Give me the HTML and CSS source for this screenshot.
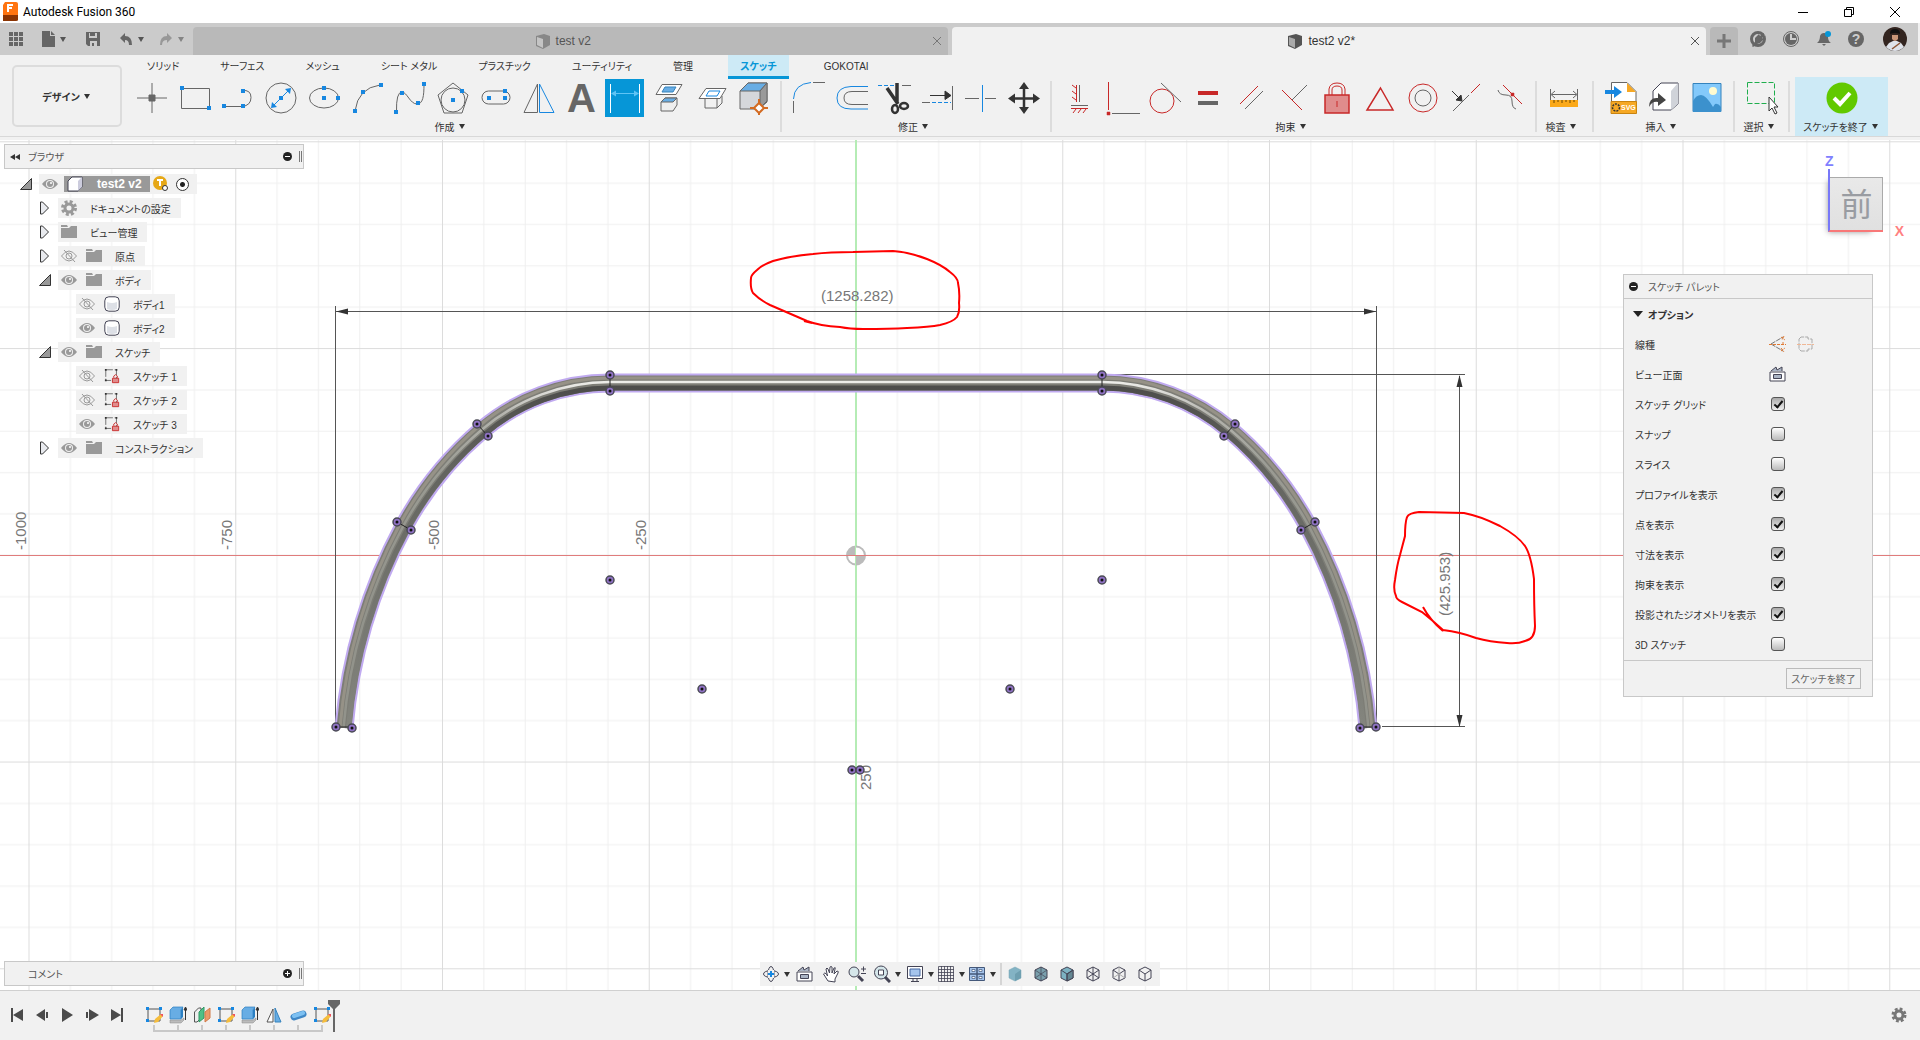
FILE: index.html
```
<!DOCTYPE html>
<html lang="ja">
<head>
  <meta charset="UTF-8">
  <title>Autodesk Fusion 360</title>
  <link rel="stylesheet" href="styles.css">
</head>
<body>
  <!-- shared icons -->
  <svg class="sprite" aria-hidden="true">
    <symbol id="eye" viewBox="0 0 16 16"><path d="M0 8Q8-2 16 8Q8 18 0 8z" fill="#999"/><circle cx="8" cy="8" r="4" fill="#f1f1f1"/><circle cx="8" cy="8" r="3" fill="#999"/><circle cx="9" cy="7" r="1" fill="#fff"/></symbol>
    <symbol id="eye-off" viewBox="0 0 16 16"><g fill="none" stroke="#999"><path d="M.5 8Q8-2 15.5 8Q8 18 .5 8z"/><circle cx="8" cy="8" r="3"/><path d="M3 2l11 12"/></g></symbol>
    <symbol id="folder" viewBox="0 0 16 16"><path d="M0 1h6l1 2H0zM0 4h8l2-2h6v12H0z" fill="#999"/></symbol>
    <symbol id="open" viewBox="0 0 12 12"><path d="M11.500 .5v11H.5z" fill="#999" stroke="#333"/></symbol>
    <symbol id="closed" viewBox="0 0 12 14"><path d="M1.500 1h2l6 6-6 6h-2z" fill="#e8eaee" stroke="#333"/></symbol>
    <symbol id="body" viewBox="0 0 16 16"><rect x=".8" y=".8" width="14.400" height="14.400" rx="4" fill="#fff" stroke="#445"/><path d="M3 6q5 2 10 0v7q-5 2-10 0z" fill="#dde0e6"/></symbol>
    <symbol id="sketch-lock" viewBox="0 0 18 18"><path d="M2 2h12v12H2z" fill="none" stroke="#666" stroke-dasharray="8 2"/><path d="M1 1h2v2H1zM13 1h2v2h-2zM1 13h2v2H1z" fill="#333"/><path d="M11 11V9q2-3 4 0v2" fill="none" stroke="#c82828"/><path d="M9.500 11.500h7v5h-7z" fill="#e08c8c" stroke="#c82828"/></symbol>
    <symbol id="cube" viewBox="0 0 16 16"><path d="M1 3l8-2 6 2v9l-7 4-7-3z" fill="currentColor"/><path d="M2 4l6 2v9l-6-3z" fill="#fff" opacity=".5"/></symbol>
    <symbol id="look" viewBox="0 0 18 16"><path d="M2 5l5-4 1 3 5-3v4" fill="#aab4c4" stroke="#445"/><path d="M1 6h15v9H1z" fill="#fff" stroke="#445"/><path d="M4.500 8.500h8v4h-8z" fill="#aab4c4" stroke="#445"/></symbol>
    <symbol id="t-sketch" viewBox="0 0 18 18"><path d="M3 3h12v12H3z" fill="none" stroke="#555"/><path d="M1 1h3v3H1zM14 1h3v3h-3zM1 13h3v3H1z" fill="#1787e0"/><path d="M9 17l1-4 6-5 2 2-5 6z" fill="#f6bd3c"/><path d="M15 8h3v3z" fill="#f05060"/></symbol>
    <symbol id="t-extrude" viewBox="0 0 18 18"><path d="M1 14l11 0 3-2v2l-3 3H1z" fill="#bbb" stroke="#888" stroke-width=".5"/><path d="M1 4l3-3h10l-2 3v9H1z" fill="#68ade4" stroke="#2b7fc2" stroke-width=".7"/><path d="M12 4l2-3v10l-2 2z" fill="#2b7fc2"/><path d="M16.500 3v11M15 4l1.500-3L18 4z" stroke="#333" fill="#333"/></symbol>
    <symbol id="vcube" viewBox="0 0 16 16"><path d="M8 1l6 3v8l-6 3-6-3V4z" stroke-linejoin="round"/></symbol>
  </svg>

  <header class="titlebar">
    <svg width="16" height="20" viewBox="0 0 16 20"><path d="M1 3l2-3h11q2 0 2 2v16H1z" fill="#ff7410"/><path d="M1 13h15v5q0 1-2 1H1z" fill="#8a3403"/><path d="M6 10V3h5M6 6h4" fill="none" stroke="#fff" stroke-width="2"/></svg>
    <h1>Autodesk Fusion 360</h1>
    <div class="window-buttons">
      <button aria-label="最小化"><svg width="12" height="12"><path d="M1 6.500h10" stroke="#000"/></svg></button>
      <button aria-label="元に戻す"><svg width="12" height="12"><path d="M1.500 3.500h7v7h-7zM3.500 3V1.500h7v7H9" fill="none" stroke="#000"/></svg></button>
      <button aria-label="閉じる"><svg width="12" height="12"><path d="M1 1l10 10M11 1L1 11" stroke="#000"/></svg></button>
    </div>
  </header>

  <div class="docbar">
    <div class="quick">
      <button aria-label="データ パネル"><svg width="14" height="16" fill="#666"><path d="M0 1h4v4H0zM5 1h4v4H5zM10 1h4v4h-4zM0 6h4v4H0zM5 6h4v4H5zM10 6h4v4h-4zM0 11h4v4H0zM5 11h4v4H5zM10 11h4v4h-4z"/></svg></button>
      <button class="file" aria-label="ファイル"><svg width="14" height="16"><path d="M1 0h8v5h5v11H1zM10 0l4 4h-4z" fill="#666"/></svg><i class="caret"></i></button>
      <button class="save" aria-label="保存"><svg width="14" height="16"><path d="M0 1h14v14H2l-2-2z" fill="#666"/><path d="M3 2h8v5H3zM4 10h7v5H4z" fill="#ccc"/><path d="M4 2h5v3H4zM6 12h2v3H6z" fill="#666"/></svg></button>
      <button aria-label="元に戻す"><svg width="14" height="14"><path d="M1 6l5-5v3q7 0 7 9h-3q0-5-4-5v3z" fill="#666"/></svg><i class="caret"></i></button>
      <button class="dim" aria-label="やり直し"><svg width="14" height="14"><path d="M13 6L8 1v3Q1 4 1 13h2q0-5 5-5v3z" fill="#777"/></svg><i class="caret"></i></button>
    </div>
    <div class="doctab">
      <button class="doc"><svg width="16" height="16" color="#888"><use href="#cube"/></svg>test v2</button>
      <button class="close" aria-label="閉じる"><svg width="10" height="10"><path d="M1 1l8 8M9 1L1 9" stroke="#777"/></svg></button>
    </div>
    <div class="doctab active">
      <button class="doc"><svg width="16" height="16" color="#555"><use href="#cube"/></svg>test2 v2*</button>
      <button class="close" aria-label="閉じる"><svg width="10" height="10"><path d="M1 1l8 8M9 1L1 9" stroke="#555"/></svg></button>
    </div>
    <button class="newtab" aria-label="新規"><svg width="14" height="14"><path d="M7 0v14M0 7h14" stroke="#777" stroke-width="3"/></svg></button>
    <div class="account">
      <button aria-label="拡張機能"><svg width="18" height="18"><circle cx="9" cy="9" r="6.500" fill="none" stroke="#666" stroke-width="3"/><path d="M15 0l3 3-3 3z" fill="#cbcbcb"/><path d="M6 8l4-4 1 2 3-3 2 2-3 3 2 1-4 4-3 1-4 3-1-1 3-4z" fill="#666"/></svg></button>
      <button aria-label="ジョブ ステータス"><svg width="18" height="18"><circle cx="9" cy="9" r="7.500" fill="none" stroke="#666"/><circle cx="9" cy="9" r="6" fill="#666"/><path d="M9 4v5h5" fill="none" stroke="#ccc" stroke-width="2"/></svg></button>
      <button aria-label="通知"><svg width="18" height="18"><path d="M2 13q3-2 3-7 1-3 4-3 4 0 4 4 0 4 3 6zM7 14h4l-2 2z" fill="#666"/><circle cx="13" cy="4" r="3" fill="#0696d7"/></svg></button>
      <button class="help" aria-label="ヘルプ">?</button>
      <button class="avatar" aria-label="プロファイル"><svg width="24" height="24" viewBox="0 0 24 24"><circle cx="12" cy="12" r="12" fill="#332520"/><path d="M3 20l3-4 4-2h4l4 2 3 4q-9 8-18 0z" fill="#dfe3ea"/><path d="M9 8h6v4q-3 4-6 0z" fill="#c89678"/><path d="M7 7q0-5 5-5t5 5q-5-2-10 0z" fill="#111"/><path d="M9 22l8-6" stroke="#8d5535" stroke-width="1.500"/></svg></button>
    </div>
  </div>

  <div class="ribbon">
    <button class="workspace">デザイン<i class="caret"></i></button>
    <div class="ribbon-main">
      <nav class="tabs">
        <a href="#">ソリッド</a><a href="#">サーフェス</a><a href="#">メッシュ</a><a href="#">シート メタル</a><a href="#">プラスチック</a><a href="#">ユーティリティ</a><a href="#">管理</a><a href="#" class="active">スケッチ</a><a href="#">GOKOTAI</a>
      </nav>
      <div class="groups">
        <section class="group">
          <div class="tools">
            <button aria-label="点"><svg viewBox="0 0 36 36"><path d="M18 3v30M3 18h30"/><path d="M15 15h6v6h-6z" fill="#666"/></svg></button>
            <button aria-label="長方形"><svg viewBox="0 0 36 36"><path d="M4.500 8.500h28v20h-28z"/><path class="p" d="M3 6h4v4H3zM30 26h4v4h-4z"/></svg></button>
            <button aria-label="線分"><svg viewBox="0 0 36 36"><path d="M4 26.500h18q9-1 9-9t-9-7"/><path class="p" d="M2 24h4v4H2zM21 24h4v4h-4zM21 9h4v4h-4z"/></svg></button>
            <button aria-label="円"><svg viewBox="0 0 36 36"><circle cx="18" cy="18" r="15"/><path class="b" d="M10 26L26 10"/><path class="p" d="M8 28l1-6 5 5zM28 8l-6 1 5 5zM16 16h4v4h-4z"/></svg></button>
            <button aria-label="楕円"><svg viewBox="0 0 36 36"><ellipse cx="18" cy="18" rx="14.500" ry="10"/><path class="p" d="M16 6h4v4h-4zM16 16h4v4h-4zM30 16h4v4h-4z"/></svg></button>
            <button aria-label="円弧"><svg viewBox="0 0 36 36"><path d="M6 31Q9 8 31 5"/><path class="p" d="M4 29h4v4H4zM12 10h4v4h-4zM30 3h4v4h-4z"/></svg></button>
            <button aria-label="スプライン"><svg viewBox="0 0 36 36"><path d="M4.500 32Q4 12 10 12c5 0 8 12 15 12 6 0 7-8 7-20"/><path class="p" d="M2 30h4v4H2zM8 11h4v4H8zM24 21h4v4h-4zM30 2h4v4h-4z"/></svg></button>
            <button aria-label="ポリゴン"><svg viewBox="0 0 36 36"><path d="M18 3l15 12-6 18H9L3 15z"/><circle cx="18" cy="20" r="12"/><path class="p" d="M16 18h4v4h-4zM25 9h4v4h-4z"/></svg></button>
            <button aria-label="スロット"><svg viewBox="0 0 36 36"><rect x="4" y="11" width="28" height="13" rx="6.500"/><path class="p" d="M9 16h4v4H9zM25 9h4v4h-4zM25 16h4v4h-4z"/></svg></button>
            <button aria-label="ミラー"><svg viewBox="0 0 36 36"><path d="M16.500 4v28.500H3z"/><path class="b" d="M18.500 4v28.500H33z"/></svg></button>
            <button class="letter" aria-label="文字">A</button>
            <button class="on" aria-label="寸法"><svg viewBox="0 0 36 36"><path d="M3.500 4v29M32.500 4v29" stroke="#fff"/><path d="M6 13.500h24" stroke="#5fc4f5"/><path d="M4 13.500l5-3v6zM32 13.500l-5-3v6z" fill="#5fc4f5" stroke="none"/></svg></button>
            <button aria-label="プロジェクト"><svg viewBox="0 0 36 36"><path d="M12 4.500h20l-6 10H6z" fill="#fff"/><path d="M15 7h11l-3 5H12z" fill="#68ade4" stroke="#3583bd"/><path d="M11 22l4-4h12v7l-4 6H11z" fill="#eee"/><path d="M11 22l4-4h12l-4 4z" fill="#68ade4"/></svg></button>
            <button aria-label="交差"><svg viewBox="0 0 36 36"><path d="M13 8.500h20l-6 10H6z" fill="#fff"/><path class="b" d="M16 11h11l-3 5H13z"/><path d="M12 19v9h12l5-5v-7M24 19v9" fill="none"/></svg></button>
            <button aria-label="フォーム"><svg viewBox="0 0 36 36"><path d="M4 11v18h19l8-7V3H12z" fill="#d5d7db"/><path d="M4 11l8-8h19l-7 8z" fill="#68ade4"/><path d="M24 11v17l7-7V3z" fill="#999"/><path d="M23 23l5 5-5 5-5-5z" fill="#fff" stroke="#d36b22" stroke-width="2"/><path d="M23 19v5M23 32v3M14 28h5M27 28h5" stroke="#d36b22" stroke-width="2"/></svg></button>
          </div>
          <button class="label">作成<i class="caret"></i></button>
        </section>
        <section class="group">
          <div class="tools">
            <button aria-label="フィレット"><svg viewBox="0 0 36 36"><path d="M2.500 21v12M22 2.500h12"/><path class="b" d="M2.500 19Q3 4 20 2.500"/></svg></button>
            <button aria-label="オフセット"><svg viewBox="0 0 36 36"><path class="b" d="M34 6.500H17Q3 7 3 18t14 11h17"/><path d="M34 11.500H18q-8 0-8 6.500t8 6.500h16"/></svg></button>
            <button aria-label="トリム"><svg viewBox="0 0 36 36"><path class="b" stroke-dasharray="4 2" d="M1 5.500h16"/><path d="M25 5.500h9"/><path d="M10 8l11 16M20 3v20" stroke="#333" stroke-width="3.500"/><g stroke="#333" stroke-width="2.500"><ellipse cx="18" cy="29" rx="3" ry="4"/><ellipse cx="27" cy="26" rx="4" ry="3"/></g></svg></button>
            <button aria-label="延長"><svg viewBox="0 0 36 36"><path d="M32.500 6v24M2 22.500h8"/><path class="b" stroke-dasharray="4 2" d="M12 22.500h19"/><path d="M10 15.500h16M25 11l6 4.500-6 4z" fill="#333" stroke="#333"/></svg></button>
            <button aria-label="分割"><svg viewBox="0 0 36 36"><path d="M2 18.500h14M22 18.500h11"/><path class="b" d="M19.500 5v27"/></svg></button>
            <button aria-label="移動"><svg viewBox="0 0 36 36"><path d="M18 7v23M6 18.500h24" stroke="#333" stroke-width="2.500"/><path d="M18 2l5 7H13zM18 34l5-7H13zM2 18.500l7-5v10zM34 18.500l-7-5v10z" fill="#333" stroke="none"/></svg></button>
          </div>
          <button class="label">修正<i class="caret"></i></button>
        </section>
        <section class="group">
          <div class="tools">
            <button aria-label="水平/垂直"><svg viewBox="0 0 36 36"><path d="M18.500 5v17M10 25.500h17"/><path class="r" d="M15.500 5v17M10 28.500h17M15 8l-4-3M15 14l-4-3M15 20l-4-3M12 33l3-4M17 33l3-4M22 33l3-4"/></svg></button>
            <button aria-label="一致"><svg viewBox="0 0 36 36"><path d="M8 33.500h28"/><path class="r" d="M4.500 2v28"/><path d="M3 32h3v3H3z" fill="#c82828" stroke="#c82828" stroke-width=".5"/></svg></button>
            <button aria-label="接線"><svg viewBox="0 0 36 36"><circle class="r" cx="15" cy="21" r="12"/><path d="M14 3l20 19"/></svg></button>
            <button aria-label="等しい"><svg viewBox="0 0 36 36"><path class="r" d="M8 13h20" stroke-width="4"/><path d="M8 23h20" stroke-width="4"/></svg></button>
            <button aria-label="平行"><svg viewBox="0 0 36 36"><path class="r" d="M7 24L25 6"/><path d="M12 29l18-18"/></svg></button>
            <button aria-label="直交"><svg viewBox="0 0 36 36"><path class="r" d="M6 10l20 20"/><path d="M16 20L31 5"/></svg></button>
            <button aria-label="固定"><svg viewBox="0 0 36 36"><path class="r" d="M10 15V9q1-6 8-6t8 6v6M13 15v-5q0-4 5-4t5 4v5"/><path d="M6 15h24v18H6z" fill="#e08c8c" stroke="#c82828" stroke-width="1.500"/><path class="r" d="M18 21v6"/></svg></button>
            <button aria-label="中点"><svg viewBox="0 0 36 36"><path class="r" d="M18.500 8L31 30H5z" stroke-width="1.500"/></svg></button>
            <button aria-label="同心円"><svg viewBox="0 0 36 36"><circle class="r" cx="18" cy="18" r="14"/><circle cx="18" cy="18" r="8"/></svg></button>
            <button aria-label="同一直線上"><svg viewBox="0 0 36 36"><path d="M5 31l16-16"/><path class="r" d="M23 13l9-9"/><path d="M4 11l9 9M14 21l-6-1 5-5z" stroke="#333" fill="#333"/></svg></button>
            <button aria-label="対称"><svg viewBox="0 0 36 36"><path d="M7 10q1 5 8 5 6 0 6 6 0 7 4 8"/><path class="r" d="M12 5l19 19"/><path d="M20 13h3v3h-3z" fill="#c82828" stroke="#c82828" stroke-width=".5"/></svg></button>
          </div>
          <button class="label">拘束<i class="caret"></i></button>
        </section>
        <section class="group">
          <div class="tools">
            <button aria-label="計測"><svg viewBox="0 0 36 36"><path d="M4.500 9v14M31.500 9v14M6 14.500h24M9 11l-4 3.500L9 18M27 11l4 3.500-4 3.500"/><path d="M4 20h28v7H4z" fill="#fba919" stroke="none"/><path d="M8 20v3M12 20v2M16 20v3M20 20v2M24 20v3M28 20v2" stroke="#664400"/></svg></button>
          </div>
          <button class="label">検査<i class="caret"></i></button>
        </section>
        <section class="group">
          <div class="tools">
            <button aria-label="SVG を挿入"><svg viewBox="0 0 36 36"><path d="M8.500 22V2.500H24l9 9V22" fill="#fff"/><path d="M24 3v9h9z" fill="#f6a824" stroke="none"/><path d="M8 21.500h25.500v12H8z" fill="#f6a824" stroke="#c98410"/><path d="M2 10h9V6l8 6-8 6v-4H2z" fill="#1787e0" stroke="none"/><circle cx="13" cy="27.500" r="3.500" stroke="#333" stroke-dasharray="2 1" stroke-width="1.500"/><text x="18" y="30" class="svgtxt">SVG</text></svg></button>
            <button aria-label="派生を挿入"><svg viewBox="0 0 36 36"><path d="M7 11l8-8h17v21l-7 6H7z" fill="#fff" stroke="#445"/><path d="M25 11l7-8v21l-7 6z" fill="#d0d3d9" stroke="none"/><path d="M3 27q0-10 9-9v-5l8 7-8 6v-4q-6-1-9 5z" fill="#444" stroke="none"/></svg></button>
            <button aria-label="キャンバス"><svg viewBox="0 0 36 36"><path d="M4 3.500h28v28H4z" fill="#83c9fb" stroke="#3583bd"/><path d="M4 21q3-6 8-6t12 12l2-3q3-1 6 3v5H4z" fill="#3c91cd" stroke="none"/><circle cx="24" cy="11" r="4" fill="#fffbd0" stroke="none"/></svg></button>
          </div>
          <button class="label">挿入<i class="caret"></i></button>
        </section>
        <section class="group">
          <div class="tools">
            <button aria-label="選択"><svg viewBox="0 0 36 36"><path d="M3.500 2.500h27v21h-27z" stroke="#1fae4d" stroke-dasharray="5 2"/><path d="M25 17v14l3-3 3 6 2-1-3-6h4z" fill="#fff" stroke="#333"/></svg></button>
          </div>
          <button class="label">選択<i class="caret"></i></button>
        </section>
        <section class="group finish">
          <div class="tools">
            <button aria-label="スケッチを終了"><svg viewBox="0 0 36 36"><circle cx="18" cy="18" r="15.500" fill="#61c900" stroke="none"/><path d="M10 18l6 6 10-11" stroke="#fff" stroke-width="4"/></svg></button>
          </div>
          <button class="label">スケッチを終了<i class="caret"></i></button>
        </section>
      </div>
    </div>
  </div>

  <main class="canvas">
    <svg class="drawing" viewBox="0 140 1920 850" preserveAspectRatio="xMidYMid slice">
      <defs>
        <pattern id="grid" x="28.500" y="141.300" width="206.750" height="206.750" patternUnits="userSpaceOnUse">
          <path d="M41.850 0v207M83.200 0v207M124.550 0v207M165.900 0v207M0 41.850h207M0 83.200h207M0 124.550h207M0 165.900h207" stroke="#efefef"/>
          <path d="M.5 0v207M0 .5h207" stroke="#dcdcdc"/>
        </pattern>
        <linearGradient id="shade" gradientUnits="userSpaceOnUse" x1="0" y1="383" x2="0" y2="728">
          <stop offset="0" stop-color="#4c4c4a"/><stop offset=".25" stop-color="#63645f"/><stop offset="1" stop-color="#84857e"/>
        </linearGradient>
        <linearGradient id="shine" gradientUnits="userSpaceOnUse" x1="0" y1="381" x2="0" y2="600">
          <stop offset="0" stop-color="#eeeeea"/><stop offset=".15" stop-color="#b4b4ae"/><stop offset=".4" stop-color="#9a9b93"/><stop offset="1" stop-color="#92938b"/>
        </linearGradient>
        <g id="point"><circle r="4" fill="#8f72c4" stroke="#4a4a55" stroke-width="1.500"/><circle r="1.500" fill="#111"/></g>
        <g id="half" fill="none">
          <path d="M856 383H610A197 197 0 0 0 482 430A340 340 0 0 0 404 526A517 517 0 0 0 344 728" stroke="#c0aaf0" stroke-width="19"/>
          <path d="M856 383H610A197 197 0 0 0 482 430A340 340 0 0 0 404 526A517 517 0 0 0 344 728" stroke="#7d7d76" stroke-width="15"/>
          <path d="M856 388H610A192 192 0 0 0 485 434A335 335 0 0 0 408 528A513 513 0 0 0 348.500 728" stroke="url(#shade)" stroke-width="5"/>
          <path d="M856 378H610A202 202 0 0 0 479 426A345 345 0 0 0 400 524A522 522 0 0 0 340 728" stroke="#969287" stroke-width="3"/>
          <path d="M856 382H610A198 198 0 0 0 482 429.500A341 341 0 0 0 403.500 525.500A518 518 0 0 0 343.500 728" stroke="url(#shine)" stroke-width="2.500"/>
          <path d="M610 375v16M477 424l11 12M397 522l14 8M336 727h16" stroke="#222"/>
          <use href="#point" x="610" y="375"/><use href="#point" x="610" y="391"/>
          <use href="#point" x="477" y="424"/><use href="#point" x="488" y="436"/>
          <use href="#point" x="397" y="522"/><use href="#point" x="411" y="530"/>
          <use href="#point" x="336" y="727"/><use href="#point" x="352" y="728"/>
          <use href="#point" x="610" y="580"/><use href="#point" x="702" y="689"/>
          <use href="#point" x="852" y="770"/>
        </g>
      </defs>
      <rect y="140" width="1920" height="850" fill="url(#grid)"/>
      <path d="M0 555.500h1920" stroke="#e07c7c"/>
      <path d="M856 140v850" stroke="#b5ecb5" stroke-width="2"/>
      <g class="axis-text">
        <text transform="translate(26 550) rotate(-90)">-1000</text>
        <text transform="translate(232 550) rotate(-90)">-750</text>
        <text transform="translate(439 550) rotate(-90)">-500</text>
        <text transform="translate(646 550) rotate(-90)">-250</text>
        <text transform="translate(871 790) rotate(-90)">250</text>
        <text x="821" y="301">(1258.282)</text>
        <text transform="translate(1450 616) rotate(-90)">(425.953)</text>
      </g>
      <circle cx="856" cy="555.500" r="9" fill="#fff" stroke="#bbb" stroke-width="2"/>
      <path d="M856 555.500v-9a9 9 0 0 0-9 9zM856 555.500v9a9 9 0 0 0 9-9z" fill="#bbb"/>
      <path d="M855.500 545v21" stroke="#b5ecb5"/><path d="M846 555.500h20" stroke="#e07c7c"/>

      <path d="M336 311.500h1040M335.500 306v421M1376.500 306v421M1106 374.500h359M1382 726.500h83M1459.500 376v350" stroke="#555"/>
      <path d="M336 311.500l12-3v6zM1376 311.500l-12-3v6zM1459.500 375l-3 12h6zM1459.500 727l-3-12h6z" fill="#333"/>
      <use href="#half"/>
      <use href="#half" transform="translate(1712 0) scale(-1 1)"/>
      <path d="M858 983q8 5 14 0" fill="none" stroke="#888"/>

      <g class="marker">
        <path d="M751 278Q750 288 753 293Q760 300 770 305L807 321Q820 326 840 327Q850 329 863 329Q890 329 907 328Q930 327 940 325Q953 322 957 317Q960 312 959 303Q960 292 958 283Q958 278 950 272Q942 265 927 259Q909 252 893 251L853 252Q830 252 813 254Q790 256 773 261Q762 265 757 270Q751 275 751 278zM804 321l8 2"/>
        <path d="M1407 517Q1409 513 1419 512L1464 513Q1480 516 1500 526Q1518 536 1525 546Q1531 555 1534 579Q1534 605 1535 626Q1535 639 1525 641Q1518 644 1507 643Q1490 642 1476 638Q1460 632 1443 630Q1432 620 1422 612L1402 602Q1396 599 1396 596Q1393 590 1395 580Q1397 565 1400 555L1405 536Q1405 523 1407 517M1423 607Q1430 620 1443 631"/>
      </g>
    </svg>

    <section class="bar browser">
      <svg width="12" height="8"><path d="M6 1v6L1 4zM11 1v6L6 4z" fill="#333"/></svg>
      <h2>ブラウザ</h2><button class="round minus" aria-label="折りたたむ"></button><i class="grip"></i>
    </section>

    <ul class="tree">
      <li><svg width="12" height="12"><use href="#open"/></svg><div><svg><use href="#eye"/></svg><b><svg viewBox="0 0 16 16"><path d="M1 5l4-4h10v10l-4 4H1z" fill="#fff" stroke="#445"/><path d="M11 5l4-4v10l-4 4z" fill="#ccd"/></svg>test2 v2</b><svg><circle cx="7" cy="7" r="7" fill="#e6a817"/><path d="M4 4h6M7 4v6" stroke="#fff" stroke-width="2"/><circle cx="12" cy="12" r="2.500" fill="#fff" stroke="#333"/></svg><input type="radio" checked aria-label="test2 v2 をアクティブ化"></div></li>
      <li class="l1"><svg width="12" height="14"><use href="#closed"/></svg><div><svg viewBox="0 0 16 16"><circle cx="8" cy="8" r="6" fill="none" stroke="#999" stroke-width="4" stroke-dasharray="2.700 2"/><circle cx="8" cy="8" r="4" fill="none" stroke="#999" stroke-width="3"/></svg><span>ドキュメントの設定</span></div></li>
      <li class="l1"><svg width="12" height="14"><use href="#closed"/></svg><div><svg><use href="#folder"/></svg><span>ビュー管理</span></div></li>
      <li class="l1"><svg width="12" height="14"><use href="#closed"/></svg><div><svg><use href="#eye-off"/></svg><svg><use href="#folder"/></svg><span>原点</span></div></li>
      <li class="l1"><svg width="12" height="12"><use href="#open"/></svg><div><svg><use href="#eye"/></svg><svg><use href="#folder"/></svg><span>ボディ</span></div></li>
      <li class="l2"><div><svg><use href="#eye-off"/></svg><svg><use href="#body"/></svg><span>ボディ1</span></div></li>
      <li class="l2"><div><svg><use href="#eye"/></svg><svg><use href="#body"/></svg><span>ボディ2</span></div></li>
      <li class="l1"><svg width="12" height="12"><use href="#open"/></svg><div><svg><use href="#eye"/></svg><svg><use href="#folder"/></svg><span>スケッチ</span></div></li>
      <li class="l2"><div><svg><use href="#eye-off"/></svg><svg><use href="#sketch-lock"/></svg><span>スケッチ 1</span></div></li>
      <li class="l2"><div><svg><use href="#eye-off"/></svg><svg><use href="#sketch-lock"/></svg><span>スケッチ 2</span></div></li>
      <li class="l2"><div><svg><use href="#eye"/></svg><svg><use href="#sketch-lock"/></svg><span>スケッチ 3</span></div></li>
      <li class="l1"><svg width="12" height="14"><use href="#closed"/></svg><div><svg><use href="#eye"/></svg><svg><use href="#folder"/></svg><span>コンストラクション</span></div></li>
    </ul>

    <div class="viewcube">
      <span class="z">Z</span>
      <div class="face">前</div>
      <span class="x">X</span>
    </div>

    <form class="palette">
      <h2><i class="round minus"></i>スケッチ パレット</h2>
      <fieldset>
        <h3><i></i>オプション</h3>
        <div class="row"><span>線種</span><button type="button" aria-label="コンストラクション"><svg width="18" height="18"><path d="M2 9l12-7M2 9l12 7" stroke="#777" stroke-dasharray="5 1"/><path d="M0 9.500h17M12 2l4 3M15 1l-2 4M12 16l4-3M12 13l3 4M14 7v4" stroke="#e07a34" stroke-dasharray="3 1"/></svg></button><button type="button" aria-label="中心線"><svg width="18" height="18"><path d="M2 4l2-2h7v2h4v10h-4v2H4l-2-2z" fill="none" stroke="#aaa" stroke-dasharray="6 1"/><path d="M0 9.500h17" stroke="#f0b896" stroke-dasharray="4 1"/></svg></button></div>
        <div class="row"><span>ビュー正面</span><button type="button" aria-label="ビュー正面"><svg width="18" height="16"><use href="#look"/></svg></button></div>
        <div class="row"><label for="c1">スケッチ グリッド</label><input id="c1" type="checkbox" checked></div>
        <div class="row"><label for="c2">スナップ</label><input id="c2" type="checkbox"></div>
        <div class="row"><label for="c3">スライス</label><input id="c3" type="checkbox"></div>
        <div class="row"><label for="c4">プロファイルを表示</label><input id="c4" type="checkbox" checked></div>
        <div class="row"><label for="c5">点を表示</label><input id="c5" type="checkbox" checked></div>
        <div class="row"><label for="c6">寸法を表示</label><input id="c6" type="checkbox" checked></div>
        <div class="row"><label for="c7">拘束を表示</label><input id="c7" type="checkbox" checked></div>
        <div class="row"><label for="c8">投影されたジオメトリを表示</label><input id="c8" type="checkbox" checked></div>
        <div class="row"><label for="c9">3D スケッチ</label><input id="c9" type="checkbox"></div>
      </fieldset>
      <footer><button type="button">スケッチを終了</button></footer>
    </form>

    <section class="bar comments"><h2>コメント</h2><button class="round plus" aria-label="展開"></button><i class="grip"></i></section>

    <div class="navbar">
      <button class="drop" aria-label="オービット"><svg viewBox="0 0 18 18"><ellipse cx="9" cy="9" rx="7.500" ry="3.500"/><ellipse cx="9" cy="9" rx="3" ry="7.500"/><path d="M6 5h6v8H6z" fill="#f1f1f1" stroke="none"/><path d="M9 6v6M6 9h6" stroke="#1787e0" stroke-width="2"/></svg><i class="caret"></i></button>
      <button aria-label="ビュー正面"><svg viewBox="0 0 18 16"><use href="#look"/></svg></button>
      <button aria-label="画面移動"><svg viewBox="0 0 18 18"><path d="M6 16L1.500 9q1-2 3 0l1 2L4 4q1-2 2 0l1.500 4L8 2q1-1 2 0v6l2-5q2-1 1 1l-1 5 3-3q2 0 1 2l-3 6v3z" fill="#fff"/></svg></button>
      <button aria-label="ズーム"><svg viewBox="0 0 18 18"><circle cx="6" cy="7" r="5" fill="#d5e6ea"/><path d="M10 11l5 5" stroke-width="3"/><path d="M13 4h5M15.500 1.500v5M13 8.500h5"/></svg></button>
      <button class="drop fit" aria-label="フィット"><svg viewBox="0 0 18 18"><circle cx="8" cy="7.500" r="6.500" fill="#d5e6ea"/><path d="M5.500 5h5v5h-5z" fill="#fff"/><path d="M12 12l5 5" stroke-width="3"/></svg><i class="caret"></i></button>
      <button class="drop" aria-label="表示設定"><svg viewBox="0 0 18 18"><path d="M1.500 1.500h15v12h-15zM5 16.500h8M7 14v3M11 14v3" fill="#fff"/><path d="M4 4h10v7H4z" fill="#a5c4ec" stroke="#4467a0"/></svg><i class="caret"></i></button>
      <button class="drop" aria-label="グリッドとスナップ"><svg viewBox="0 0 18 18"><path d="M1.500 1.500h15v15h-15zM4.500 1v16M7.500 1v16M10.500 1v16M13.500 1v16M1 4.500h16M1 7.500h16M1 10.500h16M1 13.500h16" stroke-width=".8"/></svg><i class="caret"></i></button>
      <button class="drop" aria-label="ビューポート"><svg viewBox="0 0 18 18"><path d="M1.500 2.500h15v13h-15z" fill="#a5c4ec" stroke="#44587a"/><path d="M9 2v14M1 9h16" stroke="#44587a" stroke-width="1.500"/><path d="M4 4.500h3v2H4zM11 4.500h3v2h-3zM4 11.500h3v2H4zM11 11.500h3v2h-3z" stroke="#44587a" fill="#fff" stroke-width=".7"/></svg><i class="caret"></i></button>
      <i class="sep"></i>
      <button class="style" aria-label="シェーディング"><svg viewBox="0 0 16 16"><g fill="#83b3c4" stroke="#77a5b5" stroke-width=".5"><use href="#vcube"/></g><path d="M8 8l6-4v8l-6 3z" fill="#6e9fb0" stroke="none"/></svg></button>
      <button class="style" aria-label="シェーディング 隠線"><svg viewBox="0 0 16 16"><g fill="#7aa0ad"><use href="#vcube"/></g><path d="M2 4l6 4 6-4M8 1v14M2 12l6-4 6 4" stroke-width=".7"/></svg></button>
      <button class="style" aria-label="シェーディング エッジ"><svg viewBox="0 0 16 16"><g fill="#7db2c2"><use href="#vcube"/></g><path d="M8 8l6-4v8l-6 3z" fill="#648793"/><path d="M2 4l6 4 6-4M8 8v7"/></svg></button>
      <button class="style" aria-label="ワイヤフレーム"><svg viewBox="0 0 16 16"><use href="#vcube"/><path d="M2 4l6 4 6-4M8 1v14M2 12l6-4 6 4"/></svg></button>
      <button class="style" aria-label="ワイヤフレーム 隠線"><svg viewBox="0 0 16 16"><use href="#vcube"/><path d="M2 4l6 4 6-4M8 8v7"/><path d="M2 12l6-4 6 4M8 1v7" stroke="#aaa"/></svg></button>
      <button class="style" aria-label="ワイヤフレーム エッジ"><svg viewBox="0 0 16 16"><use href="#vcube"/><path d="M2 4l6 4 6-4M8 8v7"/></svg></button>
    </div>
  </main>

  <footer class="timeline">
    <div class="playback">
      <button aria-label="最初へ"><svg width="14" height="14" fill="#4a4a4a"><path d="M1 0h2v14H1zM13 1v12L3 7z"/></svg></button>
      <button aria-label="前へ"><svg width="14" height="14" fill="#4a4a4a"><path d="M10 1v12L1 7zM11 4h2v6h-2z"/></svg></button>
      <button aria-label="再生"><svg width="14" height="14" fill="#4a4a4a"><path d="M2 0v14l11-7z"/></svg></button>
      <button aria-label="次へ"><svg width="14" height="14" fill="#4a4a4a"><path d="M4 1v12l10-6zM1 4h2v6H1z"/></svg></button>
      <button aria-label="最後へ"><svg width="14" height="14" fill="#4a4a4a"><path d="M11 0h2v14h-2zM1 1v12l10-6z"/></svg></button>
    </div>
    <ol>
      <li><svg><use href="#t-sketch"/></svg></li>
      <li><svg><use href="#t-extrude"/></svg></li>
      <li><svg viewBox="0 0 18 18"><path d="M1.500 16V6l4-4H8v10l-4 4z" fill="#eee" stroke="#555"/><path d="M6 16V6l5-5v11z" fill="#4fc087" stroke="#2f9a64"/><path d="M12 16V6l5-4v10z" fill="#ea9a68" stroke="#d07a48"/></svg></li>
      <li><svg><use href="#t-sketch"/></svg></li>
      <li><svg><use href="#t-extrude"/></svg></li>
      <li><svg viewBox="0 0 18 18"><path d="M8 3v13H2z" fill="#fff" stroke="#555"/><path d="M10 2v14h6z" fill="#68ade4" stroke="#3583bd"/></svg></li>
      <li><svg viewBox="0 0 18 18"><path d="M5 11l9-3" stroke="#3f87c6" stroke-width="7" stroke-linecap="round"/><path d="M5 10l9-3" stroke="#7cc0f2" stroke-width="4" stroke-linecap="round"/></svg></li>
      <li><svg><use href="#t-sketch"/></svg></li>
    </ol>
    <svg class="playhead" width="12" height="32"><path d="M0 0h12v4L7 9v23H5V9L0 4z" fill="#666"/></svg>
    <button class="settings" aria-label="設定"><svg width="16" height="16" viewBox="0 0 16 16"><circle cx="8" cy="8" r="6" fill="none" stroke="#777" stroke-width="3" stroke-dasharray="2.700 2"/><circle cx="8" cy="8" r="4" fill="none" stroke="#777" stroke-width="3"/></svg></button>
  </footer>
</body>
</html>
```
FILE: styles.css
```
* { box-sizing: border-box; }
body {
  margin: 0;
  min-height: 100vh;
  display: flex;
  flex-direction: column;
  font-family: "Liberation Sans", "Noto Sans CJK JP", sans-serif;
  font-feature-settings: "palt";
  font-size: 10px;
  color: #333;
  background: #f1f1f1;
}
button {
  border: none;
  background: none;
  padding: 0;
  font: inherit;
  color: inherit;
  display: flex;
  align-items: center;
  justify-content: center;
}
h1, h2, h3, ul, ol { margin: 0; padding: 0; list-style: none; font-weight: normal; }
svg { display: block; flex: none; }
.sprite { position: absolute; width: 0; height: 0; }
.caret {
  border: 3px solid transparent;
  border-top: 5px solid #333;
  border-bottom: 0;
  margin-left: 4px;
}

/* title bar */
.titlebar { height: 23px; background: #fff; display: flex; align-items: center; padding: 0 2px; }
.titlebar h1 { font: 12px Roboto, sans-serif; color: #000; margin-left: 5px; flex: 1; }
.window-buttons { display: flex; }
.window-buttons button { width: 46px; height: 20px; }

/* documents */
.docbar { height: 32px; background: #cbcbcb; display: flex; align-items: flex-end; border-right: 2px solid #f1f1f1; }
.quick { width: 193px; height: 32px; display: flex; align-items: center; padding-left: 9px; }
.quick .file { margin-left: 18px; }
.quick .save { margin: 0 19px 0 20px; }
.quick .dim { margin-left: 15px; opacity: .6; }
.quick .caret { border-top-color: #555; margin-left: 5px; }
.doctab {
  flex: 754 0 0;
  height: 28px;
  background: #b9b9b9;
  border-radius: 4px 4px 0 0;
  display: flex;
  font-size: 12px;
  color: #555;
  margin-right: 4px;
}
.doctab .doc { flex: 1; gap: 5px; padding-left: 7px; }
.doctab .close { width: 22px; }
.doctab.active { background: #f1f1f1; color: #333; }
.newtab { width: 28px; height: 28px; background: #b9b9b9; border-radius: 4px 4px 0 0; }
.account { display: flex; align-items: center; height: 32px; padding: 0 11px; gap: 15px; }
.account .help { width: 16px; height: 16px; border-radius: 50%; background: #666; color: #ccc; font: bold 14px "Liberation Sans", sans-serif; }
.account .avatar { margin-left: 4px; }

/* ribbon */
.ribbon { height: 82px; border-bottom: 1px solid #d8d8d8; display: flex; }
.workspace {
  width: 110px;
  height: 62px;
  margin: 10px 8px 0 12px;
  padding-right: 2px;
  border: 2px solid #dcdcdc;
  border-radius: 5px;
  font-weight: bold;
}
.ribbon-main { flex: 1; }
.tabs { display: flex; height: 24px; padding-left: 5px; gap: 17px; }
.tabs a {
  color: #333;
  text-decoration: none;
  padding: 0 12px;
  line-height: 24px;
  white-space: nowrap;
}
.tabs a.active { background: #cdeaf6; color: #0696d7; font-weight: bold; border-bottom: 3px solid #0696d7; margin: 0 6px; }
.groups { display: flex; }
.group { position: relative; margin-right: 12px; }
.group::after {
  content: "";
  position: absolute;
  right: -7px;
  top: 2px;
  width: 2px;
  height: 51px;
  background: #dcdcdc;
}
.group:nth-child(4) { padding-right: 2px; }
.tools { display: flex; justify-content: center; }
.tools button { width: 43px; height: 38px; }
.tools svg { width: 36px; height: 36px; fill: none; stroke: #666; }
.tools .p { fill: #1787e0; stroke: none; }
.tools .b { stroke: #1787e0; }
.tools .r { stroke: #c82828; }
.tools .on { background: #0696d7; width: 39px; margin: 0 2px; }
.tools .letter { font: bold 40px "Liberation Sans", sans-serif; color: #666; }
.svgtxt { font: bold 7px "Liberation Sans", sans-serif; fill: #fff; stroke: none; }
.label { width: 100%; height: 19px; padding-right: 6px; white-space: nowrap; }
.finish { width: 93px; background: #cdeaf6; height: 59px; margin: -2px 0 0; padding-top: 2px; }
.finish::after { display: none; }
.finish .label { padding-right: 2px; }

/* modelling canvas */
.canvas { flex: 1; position: relative; min-height: 640px; background: #fff; border-top: 3px solid #f1f1f1; overflow: hidden; }
.drawing { position: absolute; inset: 0; width: 100%; height: 100%; }
.axis-text { font: 15px "Liberation Sans", sans-serif; fill: #777; }
.marker { fill: none; stroke: #f00; stroke-width: 2; }

.bar {
  position: absolute;
  left: 4px;
  width: 300px;
  height: 25px;
  border: 1px solid #c8c8c8;
  background: #f1f1f1;
  display: flex;
  align-items: center;
  padding-left: 4px;
}
.bar h2 { flex: 1; font-size: 10px; margin-left: 7px; color: #555; }
.browser { top: 4px; }
.comments { bottom: 4px; }
.comments h2 { margin-left: 19px; }
.round { width: 9px; height: 9px; border-radius: 50%; background: #222; position: relative; flex: none; }
.round::before, .plus::after { content: ""; position: absolute; left: 2px; top: 4px; width: 5px; height: 1px; background: #fff; }
.plus::after { transform: rotate(90deg); }
.grip { width: 3px; height: 11px; border: 1px solid #777; border-width: 0 1px; margin: 0 1px 0 7px; }

.tree { position: absolute; top: 34px; left: 20px; }
.tree li { display: flex; align-items: center; height: 20px; margin-bottom: 4px; }
.tree .l1 { padding-left: 19px; }
.tree .l2 { padding-left: 56px; }
.tree div { height: 20px; background: #f1f1f1; display: flex; align-items: center; gap: 9px; padding: 0 10px 0 3px; }
.tree li > svg + div { margin-left: 7px; }
.tree div svg { width: 16px; height: 16px; }
.tree span { margin-left: 4px; white-space: nowrap; }
.tree b { background: #999; color: #fff; font-size: 12px; height: 16px; display: flex; align-items: center; gap: 14px; padding: 0 8px 0 3px; margin: 0 -6px 0 -3px; }
.tree input {
  appearance: none;
  width: 13px;
  height: 13px;
  margin: 0 -2px 0 -2px;
  border: 1px solid #333;
  border-radius: 50%;
  background: radial-gradient(#222 2px, #fff 3px);
}

.viewcube { position: absolute; top: 14px; right: 14px; width: 81px; height: 84px; color: #ff8080; font: bold 14px "Liberation Sans", sans-serif; }
.viewcube .z { color: #8080ff; display: block; height: 15px; line-height: 15px; }
.viewcube .face {
  width: 55px;
  height: 63px;
  margin-left: 3px;
  padding-top: 8px;
  border-left: 2px solid #7878f8;
  border-bottom: 2px solid #f87878;
  font: 32px/50px "Noto Sans CJK JP", sans-serif;
  color: #999ca2;
  text-align: center;
  background: linear-gradient(#aaa, #aaa) 0 8px / 100% 1px no-repeat, linear-gradient(#aaa, #aaa) 100% 8px / 1px 100% no-repeat, linear-gradient(#e9e9e9, #dfdfdf) 0 8px no-repeat;
  box-shadow: -6px 6px 6px -6px #999;
}
.viewcube .x { position: absolute; right: 2px; bottom: -1px; }

.palette {
  position: absolute;
  top: 134px;
  right: 47px;
  width: 250px;
  background: #f1f1f1;
  border: 1px solid #c8c8c8;
}
.palette h2 { height: 24px; border-bottom: 1px solid #c8c8c8; display: flex; align-items: center; gap: 10px; padding-left: 5px; font-size: 10px; color: #555; }
.palette fieldset { border: 0; margin: 0; padding: 0 0 1px 11px; min-width: 0; }
.palette h3 { height: 30px; display: flex; align-items: center; font-size: 10px; font-weight: bold; gap: 5px; margin-left: -2px; }
.palette h3 i { border: 5px solid transparent; border-top: 6px solid #222; border-bottom: 0; }
.row { height: 30px; display: flex; align-items: center; gap: 10px; }
.row > :first-child { width: 124px; white-space: nowrap; }
.row button { width: 18px; }
.row input {
  appearance: none;
  width: 14px;
  height: 14px;
  margin: 0 2px;
  border: 1px solid #555;
  border-radius: 3px;
  background: linear-gradient(#fff, #bbb);
}
.row input:checked { background: linear-gradient(#aaa, #eee); }
.row input:checked::after {
  content: "";
  display: block;
  width: 3px;
  height: 7px;
  margin: 1px 0 0 4px;
  border: solid #111;
  border-width: 0 2px 2px 0;
  transform: rotate(40deg);
}
.palette footer { border-top: 1px solid #c8c8c8; height: 36px; padding: 7px 11px; display: flex; justify-content: flex-end; }
.palette footer button { width: 75px; height: 21px; border: 1px solid #bbb; color: #666; }

.navbar {
  position: absolute;
  left: 50%;
  bottom: 4px;
  width: 400px;
  height: 24px;
  margin-left: -200px;
  background: #f1f1f1;
  display: flex;
  align-items: center;
}
.navbar svg { width: 18px; height: 18px; fill: none; stroke: #445; }
.navbar button { width: 26px; }
.navbar .drop { width: 31px; }
.navbar .drop:first-child { width: 32px; }
.navbar .fit { width: 34px; }
.navbar .caret { margin-left: 4px; }
.navbar .sep { width: 2px; height: 22px; background: #d5d5d5; margin-left: 3px; }
.navbar .style svg { width: 16px; height: 16px; }

/* timeline */
.timeline { height: 50px; border-top: 1px solid #d0d0d0; display: flex; padding: 9px 13px 0 4px; }
.playback { display: flex; height: 30px; margin-right: 13px; }
.playback button { width: 25px; }
.timeline ol { display: flex; height: 32px; }
.timeline li { width: 24px; position: relative; padding: 6px 3px 0; }
.timeline li svg { width: 18px; height: 18px; }
.timeline li::after { content: ""; position: absolute; left: 11px; top: 25px; width: 22px; height: 5px; border: 2px solid #c8c8c8; border-width: 0 2px 2px; }
.timeline li:last-child::after { display: none; }
.playhead { margin-left: -6px; }
.settings { margin-left: auto; height: 30px; }
```
